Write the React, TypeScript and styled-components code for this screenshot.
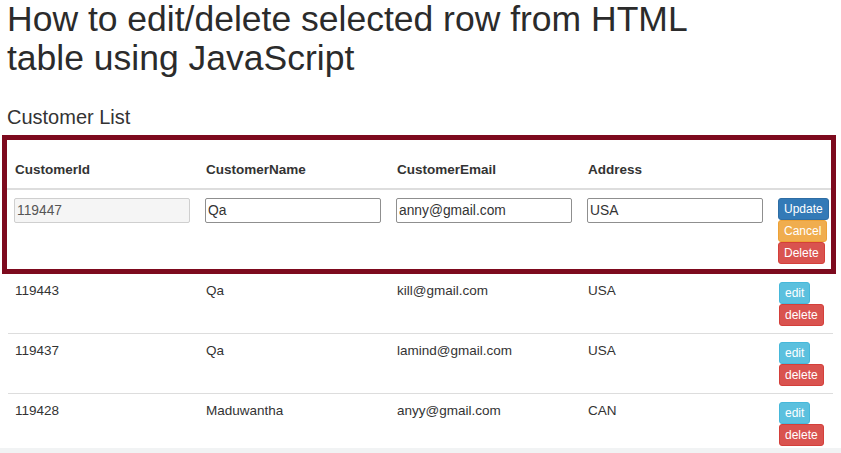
import styled, { createGlobalStyle } from "styled-components";

const GlobalStyle = createGlobalStyle`
* {
    box-sizing: border-box;
}

body {
    margin: 0;
    background: #ffffff;
    font-family: "Liberation Sans", Arial, sans-serif;
    color: #333333;
}
`;

interface ICustomer {
    id: string;
    name: string;
    email: string;
    address: string;
}

const headers = ["CustomerId", "CustomerName", "CustomerEmail", "Address", ""];

const editing: ICustomer = {
    id: "119447",
    name: "Qa",
    email: "anny@gmail.com",
    address: "USA"
};

const customers: ICustomer[] = [
    { id: "119443", name: "Qa", email: "kill@gmail.com", address: "USA" },
    { id: "119437", name: "Qa", email: "lamind@gmail.com", address: "USA" },
    { id: "119428", name: "Maduwantha", email: "anyy@gmail.com", address: "CAN" }
];

const btnColors = {
    primary: { bg: "#337ab7", border: "#2e6da4" },
    warning: { bg: "#f0ad4e", border: "#eea236" },
    danger: { bg: "#d9534f", border: "#d43f3a" },
    info: { bg: "#5bc0de", border: "#46b8da" }
};

type BtnKind = keyof typeof btnColors;

export default function App() {
    return (
        <>
            <GlobalStyle />
            <Page>
                <Title>How to edit/delete selected row from HTML table using JavaScript</Title>
                <SubTitle>Customer List</SubTitle>

                <EditBox>
                    <HeadRow>
                        {headers.map((h, i) => (
                            <HeadCell key={i}>{h}</HeadCell>
                        ))}
                    </HeadRow>
                    <EditRow>
                        <InputCell>
                            <TextInput defaultValue={editing.id} disabled />
                        </InputCell>
                        <InputCell>
                            <TextInput defaultValue={editing.name} />
                        </InputCell>
                        <InputCell>
                            <TextInput defaultValue={editing.email} />
                        </InputCell>
                        <InputCell>
                            <TextInput defaultValue={editing.address} />
                        </InputCell>
                        <ActionCell>
                            <Btn $kind="primary">Update</Btn>
                            <Btn $kind="warning">Cancel</Btn>
                            <Btn $kind="danger">Delete</Btn>
                        </ActionCell>
                    </EditRow>
                </EditBox>

                <Rows>
                    {customers.map((c) => (
                        <DataRow key={c.id}>
                            <Cell>{c.id}</Cell>
                            <Cell>{c.name}</Cell>
                            <Cell>{c.email}</Cell>
                            <Cell>{c.address}</Cell>
                            <ActionCell>
                                <Btn $kind="info">edit</Btn>
                                <Btn $kind="danger">delete</Btn>
                            </ActionCell>
                        </DataRow>
                    ))}
                </Rows>
                <Footer />
            </Page>
        </>
    );
}

const Page = styled("div")`
width: 841px;
height: 453px;
overflow: hidden;
`;

const Title = styled("h1")`
margin: 0 0 0 7px;
width: 730px;
font-size: 35.5px;
font-weight: 400;
line-height: 38.5px;
color: #2b2b2b;
`;

const SubTitle = styled("h3")`
margin: 29px 0 7px 7px;
font-size: 20px;
font-weight: 400;
line-height: 22px;
color: #333333;
`;

const grid = `
display: grid;
grid-template-columns: 191px 191px 191px 191px 1fr;
`;

const EditBox = styled("div")`
margin-left: 2px;
width: 834px;
border: 5px solid #7d0a1e;
`;

const HeadRow = styled("div")`
${grid}
border-bottom: 2px solid #dddddd;
`;

const HeadCell = styled("div")`
padding: 20px 8px 8px;
font-size: 13.5px;
font-weight: 700;
line-height: 20px;
`;

const EditRow = styled("div")`
${grid}
padding-bottom: 5px;
`;

const InputCell = styled("div")`
padding: 8px 7px 0 7px;
`;

const TextInput = styled("input")`
display: block;
width: 176px;
height: 25px;
padding: 1px 2px;
border: 1px solid #8f8f8f;
border-radius: 2px;
font-family: "Liberation Sans", Arial, sans-serif;
font-size: 13.8px;
color: #333333;
background: #ffffff;

&:disabled {
    background: #f5f5f5;
    border-color: #cfcfcf;
    color: #555555;
}
`;

const ActionCell = styled("div")`
display: flex;
flex-direction: column;
align-items: flex-start;
padding: 8px 7px 0;
`;

const Btn = styled("button")<{ $kind: BtnKind }>`
padding: 1px 5px;
border: 1px solid ${props => btnColors[props.$kind].border};
border-radius: 3px;
background: ${props => btnColors[props.$kind].bg};
color: #ffffff;
font-family: "Liberation Sans", Arial, sans-serif;
font-size: 12px;
line-height: 18px;
`;

const Rows = styled("div")`
margin-left: 8px;
width: 825px;
`;

const DataRow = styled("div")`
${grid}
height: 60px;
border-top: 1px solid #dddddd;

&:first-child {
    height: 59px;
    border-top: none;
}

&:last-child {
    height: 55px;
}
`;

const Cell = styled("div")`
padding: 7px 7px;
font-size: 13.5px;
line-height: 20px;
`;

const Footer = styled("div")`
height: 20px;
background: #f1f3f4;
`;
